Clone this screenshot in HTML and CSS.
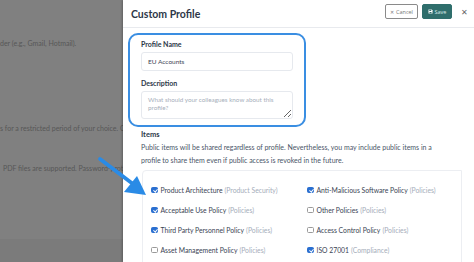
FILE: index.html
```html
<!DOCTYPE html>
<html>
<head>
<meta charset="utf-8">
<link rel="stylesheet" href="styles.css">
</head>
<body>
<div class="page">
  <div class="backdrop">
    <p class="bg-line l1">der (e.g., Gmail, Hotmail).</p>
    <p class="bg-line l2">s for a restricted period of your choice. C</p>
    <p class="bg-line l3">PDF files are supported. Password-prot</p>
    <div class="bg-footer"></div>
  </div>
  <div class="panel">
    <header class="panel-head">
      <h1 class="title">Custom Profile</h1>
      <div class="actions">
        <button class="btn btn-cancel"><span class="x">✕</span> Cancel</button>
        <button class="btn btn-save"><svg class="floppy" viewBox="0 0 10 10"><path d="M1 1h6.5L9 2.5V9H1z" fill="#fff"/><rect x="2.5" y="1.6" width="4" height="2.3" fill="#2f6e6c"/><rect x="3" y="6" width="4" height="2.4" fill="#2f6e6c"/></svg> Save</button>
        <span class="close">✕</span>
      </div>
    </header>
    <div class="panel-body">
      <section class="highlight">
        <label class="label">Profile Name</label>
        <div class="input">EU Accounts</div>
        <label class="label desc-label">Description</label>
        <textarea class="textarea" placeholder="What should your colleagues know about this profile?"></textarea>
      </section>
      <h2 class="items-title">Items</h2>
      <p class="items-help">Public items will be shared regardless of profile. Nevertheless, you may include public items in a profile to share them even if public access is revoked in the future.</p>
      <div class="items-box">
        <div class="item"><span class="cb on"></span>Product Architecture <span class="cat">(Product Security)</span></div>
        <div class="item"><span class="cb on"></span>Anti-Malicious Software Policy <span class="cat">(Policies)</span></div>
        <div class="item"><span class="cb on"></span>Acceptable Use Policy <span class="cat">(Policies)</span></div>
        <div class="item"><span class="cb"></span>Other Policies <span class="cat">(Policies)</span></div>
        <div class="item"><span class="cb on"></span>Third Party Personnel Policy <span class="cat">(Policies)</span></div>
        <div class="item"><span class="cb"></span>Access Control Policy <span class="cat">(Policies)</span></div>
        <div class="item"><span class="cb"></span>Asset Management Policy <span class="cat">(Policies)</span></div>
        <div class="item"><span class="cb on"></span>ISO 27001 <span class="cat">(Compliance)</span></div>
      </div>
    </div>
  </div>
  <svg class="arrow" viewBox="0 0 474 262" width="474" height="262">
    <line x1="100" y1="159" x2="133" y2="184" stroke="#2a8be6" stroke-width="3.8" stroke-linecap="round"/>
    <polygon points="146,195 124,192 137,176" fill="#2a8be6"/>
  </svg>
</div>
</body>
</html>
```
FILE: styles.css
```css
* { box-sizing: border-box; }
html, body { margin: 0; padding: 0; }
body {
  width: 474px;
  height: 262px;
  overflow: hidden;
  font-family: "Lato", "Noto Sans", sans-serif;
  color: #2d3748;
}
.page {
  position: relative;
  width: 474px;
  height: 262px;
  display: grid;
  grid-template-columns: 123px 1fr;
}
.backdrop {
  background: #808080;
  overflow: hidden;
  white-space: nowrap;
  display: flex;
  flex-direction: column;
  font-size: 7px;
  color: #575757;
}
.bg-line { margin: 0; line-height: 10px; }
.l1 { margin-top: 38px; }
.l2 { margin-top: 75px; }
.l3 { margin-top: 30px; padding-left: 3px; }
.bg-footer { margin-top: auto; height: 23px; background: #7b7b7b; }

.panel {
  background: #fff;
  box-shadow: -1px 0 2px rgba(0,0,0,0.25);
  display: flex;
  flex-direction: column;
  overflow: hidden;
}
.panel-head {
  height: 28px;
  flex: none;
  border-bottom: 1px solid #e8eaee;
  display: flex;
  align-items: center;
  justify-content: space-between;
  padding: 0 5px 0 8px;
}
.title {
  margin: 0;
  font-size: 10.5px;
  font-weight: 700;
  color: #2d3748;
}
.actions { display: flex; align-items: center; gap: 4px; margin-top: -4px; }
.btn {
  height: 15px;
  font-family: "Open Sans", sans-serif;
  font-size: 5.5px;
  border-radius: 2px;
  padding: 0;
  display: flex;
  align-items: center;
  justify-content: center;
  gap: 2px;
}
.btn-cancel { width: 33px; background: #fff; border: 1px solid #8a8a8a; color: #777; }
.btn-cancel .x { font-size: 5px; }
.btn-save { width: 30px; background: #2f6e6c; border: 1px solid #2f6e6c; color: #d9ecea; }
.floppy { width: 5px; height: 5px; }
.close { font-size: 8px; color: #666; margin-left: 5px; width: 8px; }

.panel-body { padding: 5px 16px 0 18px; }
.highlight {
  display: flex;
  flex-direction: column;
  width: 178px;
  height: 94px;
  margin-left: -13px;
  border: 2px solid #3a8ee2;
  border-radius: 10px;
  padding: 4px 11px 6px 11px;
}
.label { font-size: 7px; font-weight: 700; line-height: 10px; color: #2d3748; }
.input {
  margin-top: 3px;
  height: 19px;
  flex: none;
  border: 1px solid #e6e9ee;
  border-radius: 3px;
  font-size: 6.5px;
  line-height: 17px;
  padding-left: 6px;
  color: #3d4656;
}
.desc-label { margin-top: 7px; }
.textarea {
  margin-top: 3px;
  height: 28px;
  flex: none;
  border: 1px solid #e6e9ee;
  border-radius: 3px;
  font-family: inherit;
  font-size: 6.3px;
  line-height: 8px;
  padding: 4px 6px;
  resize: vertical;
  overflow: hidden;
}
.textarea::placeholder { color: #a7afbb; }
.items-title {
  margin: 2px 0 0 0;
  font-size: 7.5px;
  font-weight: 700;
  line-height: 11px;
  color: #2d3748;
}
.items-help {
  margin: 1px 0 0 0;
  font-size: 7px;
  line-height: 12.5px;
  color: #4a5568;
  width: 302px;
}
.items-box {
  margin-top: 4px;
  margin-left: 1px;
  border: 1px solid #eceef2;
  border-radius: 4px 0 0 0;
  padding: 14px 0 10px 8px;
  display: grid;
  grid-template-columns: 156px 1fr;
  row-gap: 10px;
  width: 320px;
}
.item {
  font-size: 6.8px;
  line-height: 10px;
  color: #3a4454;
  display: flex;
  align-items: center;
  white-space: nowrap;
}
.cat { color: #a5adba; margin-left: 2px; }
.cb {
  width: 6.5px;
  height: 6.5px;
  border: 1px solid #9a9a9a;
  border-radius: 1.5px;
  background: #fff;
  margin-right: 3px;
  flex: none;
  position: relative;
}
.cb.on {
  background: #2a6fd0;
  border-color: #2a6fd0;
}
.cb.on::after {
  content: "";
  position: absolute;
  left: 1.6px;
  top: 0px;
  width: 1.6px;
  height: 3.2px;
  border: solid #fff;
  border-width: 0 1px 1px 0;
  transform: rotate(40deg);
}
.arrow {
  position: absolute;
  left: 0;
  top: 0;
  pointer-events: none;
}
```
